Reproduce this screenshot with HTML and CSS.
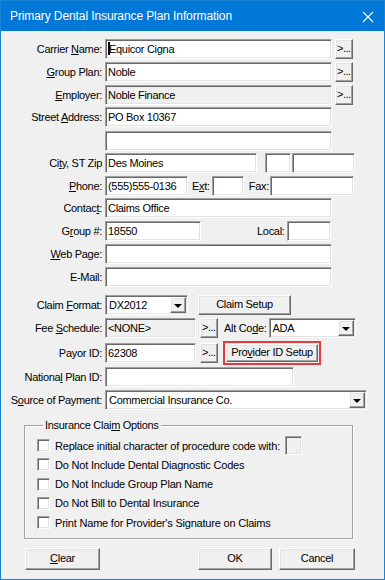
FILE: index.html
```html
<!DOCTYPE html>
<html lang="en">
<head>
    <meta charset="UTF-8">
    <meta name="viewport" content="width=device-width, initial-scale=1.0">
    <title>Primary Dental Insurance Plan Information</title>
    <link rel="stylesheet" href="styles.css">
</head>
<body>
<div class="window">
    <div class="titlebar">
        <span class="title">Primary Dental Insurance Plan Information</span>
        <svg class="close" width="12" height="12" viewBox="0 0 12 12">
            <path d="M1 1 L11 11 M11 1 L1 11" stroke="#fff" stroke-width="1.1" fill="none"/>
        </svg>
    </div>

    <div class="form">
        <!-- Carrier -->
        <div class="row">
            <span class="lbl">Carrier <u>N</u>ame:</span>
            <div class="field w-wide"><span class="caret"></span>Equicor Cigna</div>
            <div class="btn more">&gt;...</div>
        </div>
        <div class="row">
            <span class="lbl"><u>G</u>roup Plan:</span>
            <div class="field w-wide">Noble</div>
            <div class="btn more">&gt;...</div>
        </div>
        <div class="row">
            <span class="lbl"><u>E</u>mployer:</span>
            <div class="field w-wide off">Noble Finance</div>
            <div class="btn more">&gt;...</div>
        </div>
        <div class="row g2">
            <span class="lbl">Street <u>A</u>ddress:</span>
            <div class="field w-wide">PO Box 10367</div>
        </div>
        <div class="row g4">
            <span class="lbl"></span>
            <div class="field w-wide"></div>
        </div>
        <div class="row g2">
            <span class="lbl">Ci<u>t</u>y, ST Zip</span>
            <div class="field w-city">Des Moines</div>
            <div class="field w-state"></div>
            <div class="field w-zip"></div>
        </div>
        <div class="row">
            <span class="lbl"><u>P</u>hone:</span>
            <div class="field w-phone">(555)555-0136</div>
            <span class="inline-lbl ext">E<u>x</u>t:</span>
            <div class="field w-ext"></div>
            <span class="inline-lbl fax">Fax:</span>
            <div class="field w-fax"></div>
        </div>
        <div class="row g2">
            <span class="lbl">Contac<u>t</u>:</span>
            <div class="field w-wide">Claims Office</div>
        </div>
        <div class="row">
            <span class="lbl">G<u>r</u>oup #:</span>
            <div class="field w-group">18550</div>
            <span class="inline-lbl local">Local:</span>
            <div class="field w-local"></div>
        </div>
        <div class="row">
            <span class="lbl"><u>W</u>eb Page:</span>
            <div class="field w-wide"></div>
        </div>
        <div class="row">
            <span class="lbl">E-Mail:</span>
            <div class="field w-wide"></div>
        </div>

        <!-- Claim settings -->
        <div class="row g8">
            <span class="lbl">Claim <u>F</u>ormat:</span>
            <div class="field combo w-format"><span>DX2012</span><span class="btn drop"></span></div>
            <div class="btn setup">Claim Setup</div>
        </div>
        <div class="row">
            <span class="lbl">Fee <u>S</u>chedule:</span>
            <div class="field off w-fee">&lt;NONE&gt;</div>
            <div class="btn more m4">&gt;...</div>
            <span class="inline-lbl alt">Alt Co<u>d</u>e:</span>
            <div class="field combo w-alt"><span>ADA</span><span class="btn drop"></span></div>
        </div>
        <div class="row tall">
            <span class="lbl">Payor ID:</span>
            <div class="field w-fee">62308</div>
            <div class="btn more m4">&gt;...</div>
            <div class="highlight">
                <div class="btn provider">Pro<u>v</u>ider ID Setup</div>
            </div>
        </div>
        <div class="row g2">
            <span class="lbl">Nationa<u>l</u> Plan ID:</span>
            <div class="field w-npi"></div>
        </div>
        <div class="row">
            <span class="lbl">S<u>o</u>urce of Payment:</span>
            <div class="field combo w-source"><span>Commercial Insurance Co.</span><span class="btn drop"></span></div>
        </div>
    </div>

    <fieldset class="options">
        <legend>Insurance Clai<u>m</u> Options</legend>
        <div class="check">
            <span class="box"></span>
            <span>Replace initial character of procedure code with:</span>
            <div class="field w-char"></div>
        </div>
        <div class="check"><span class="box"></span><span>Do Not Include Dental Diagnostic Codes</span></div>
        <div class="check"><span class="box"></span><span>Do Not Include Group Plan Name</span></div>
        <div class="check"><span class="box"></span><span>Do Not Bill to Dental Insurance</span></div>
        <div class="check"><span class="box"></span><span>Print Name for Provider's Signature on Claims</span></div>
    </fieldset>

    <div class="actions">
        <div class="btn action clear"><u>C</u>lear</div>
        <div class="btn action ok">OK</div>
        <div class="btn action cancel">Cancel</div>
    </div>
</div>
</body>
</html>
```

FILE: styles.css
```css
body {
    margin: 0;
    background: #ffffff;
    font-family: "Liberation Sans", Arial, sans-serif;
    font-size: 11px;
    letter-spacing: -0.3px;
    color: #000;
}

u {
    text-decoration-thickness: 1px;
    text-underline-offset: 1px;
}

.window {
    width: 385px;
    height: 580px;
    box-sizing: border-box;
    border: 1px solid #1883d7;
    background: #f0f0f0;
    display: flex;
    flex-direction: column;
}

/* Title bar */
.titlebar {
    height: 30px;
    flex: none;
    background: #0078d7;
    color: #fff;
    display: flex;
    align-items: center;
    justify-content: space-between;
    padding: 0 10px 0 9px;
    font-family: "Liberation Sans", Arial, sans-serif;
    font-size: 12px;
    letter-spacing: -0.1px;
}

.close {
    margin-top: 1px;
}

/* Form rows */
.form {
    padding-top: 8px;
    display: flex;
    flex-direction: column;
}

.row {
    display: flex;
    align-items: center;
    height: 20px;
    margin-top: 3px;
}

.row:first-child { margin-top: 0; }
.row.g2 { margin-top: 2px; }
.row.g4 { margin-top: 4px; }
.row.g8 { margin-top: 8px; }
.row.tall { height: 24px; }

.lbl {
    width: 101px;
    margin-right: 3px;
    text-align: right;
    white-space: nowrap;
    flex: none;
}

.inline-lbl {
    white-space: nowrap;
}

/* Sunken edit box */
.field {
    height: 20px;
    box-sizing: border-box;
    flex: none;
    background: #fff;
    border: 1px solid;
    border-color: #a0a0a0 #fff #fff #a0a0a0;
    box-shadow: inset 1px 1px #696969, inset -1px -1px #e3e3e3;
    padding: 0 2px;
    line-height: 18px;
    white-space: nowrap;
    overflow: hidden;
}

.field.off { background: #f0f0f0; }

.caret {
    display: inline-block;
    width: 2px;
    height: 13px;
    background: #000;
    vertical-align: -2px;
    margin-right: -1px;
}

.w-wide { width: 227px; }
.w-city { width: 152px; }
.w-state { width: 26px; margin-left: 8px; }
.w-zip { width: 63px; margin-left: 1px; }
.w-phone { width: 83px; }
.w-ext { width: 32px; margin-left: 2px; }
.w-fax { width: 84px; margin-left: 1px; }
.w-group { width: 96px; }
.w-local { width: 44px; margin-left: 2px; }
.w-format { width: 83px; }
.w-fee { width: 91px; }
.w-alt { width: 87px; margin-left: 2px; }
.w-npi { width: 189px; }
.w-source { width: 262px; }

.ext { margin-left: 4px; }
.fax { margin-left: 5px; }
.local { margin-left: 56px; }
.alt { margin-left: 6px; }

/* Raised buttons */
.btn {
    box-sizing: border-box;
    flex: none;
    background: #f0f0f0;
    border: 1px solid;
    border-color: #fff #696969 #696969 #fff;
    box-shadow: inset -1px -1px #a0a0a0, inset 1px 1px #e3e3e3;
    white-space: nowrap;
}

.more {
    width: 18px;
    height: 20px;
    margin-left: 3px;
    padding-left: 1px;
    line-height: 17px;
    letter-spacing: -0.5px;
}

.more.m4 { margin-left: 4px; }

.setup {
    width: 93px;
    height: 20px;
    margin-left: 10px;
    text-align: center;
    line-height: 17px;
}

/* Combo box */
.combo {
    display: flex;
    justify-content: space-between;
    align-items: center;
    padding: 0 1px 0 3px;
}

.drop {
    width: 16px;
    height: 16px;
    display: flex;
    align-items: center;
    justify-content: center;
}

.drop::after {
    content: "";
    border-left: 4px solid transparent;
    border-right: 4px solid transparent;
    border-top: 4px solid #000;
    margin-top: 1px;
}

/* Highlighted provider button */
.highlight {
    margin-left: 5px;
    border: 2px solid #e8393f;
    padding: 1px;
    display: flex;
}

.provider {
    width: 92px;
    height: 18px;
    text-align: center;
    line-height: 15px;
}

/* Options group */
.options {
    margin: 9px 0 0 23px;
    width: 329px;
    box-sizing: border-box;
    padding: 8px 0 9px 12px;
    border: 1px solid #a0a0a0;
    box-shadow: inset 1px 1px #fff, 1px 1px #fff;
    display: flex;
    flex-direction: column;
    gap: 6.25px;
}

.options legend {
    margin-left: 6px;
    padding: 0 2px;
}

.check {
    display: flex;
    align-items: center;
    height: 13px;
    white-space: nowrap;
    letter-spacing: -0.2px;
}

.box {
    width: 13px;
    height: 13px;
    box-sizing: border-box;
    flex: none;
    background: #fff;
    border: 1px solid;
    border-color: #a0a0a0 #fff #fff #a0a0a0;
    box-shadow: inset 1px 1px #696969, inset -1px -1px #e3e3e3;
    margin-right: 5px;
}

.w-char {
    width: 17px;
    height: 19px;
    margin-left: 5px;
    background: #f0f0f0;
}

/* Bottom buttons */
.actions {
    display: flex;
    margin-top: 9px;
    padding-left: 24px;
}

.action {
    height: 22px;
    line-height: 19px;
    text-align: center;
}

.clear { width: 75px; }
.ok { width: 74px; margin-left: 98px; }
.cancel { width: 76px; margin-left: 7px; }
```
